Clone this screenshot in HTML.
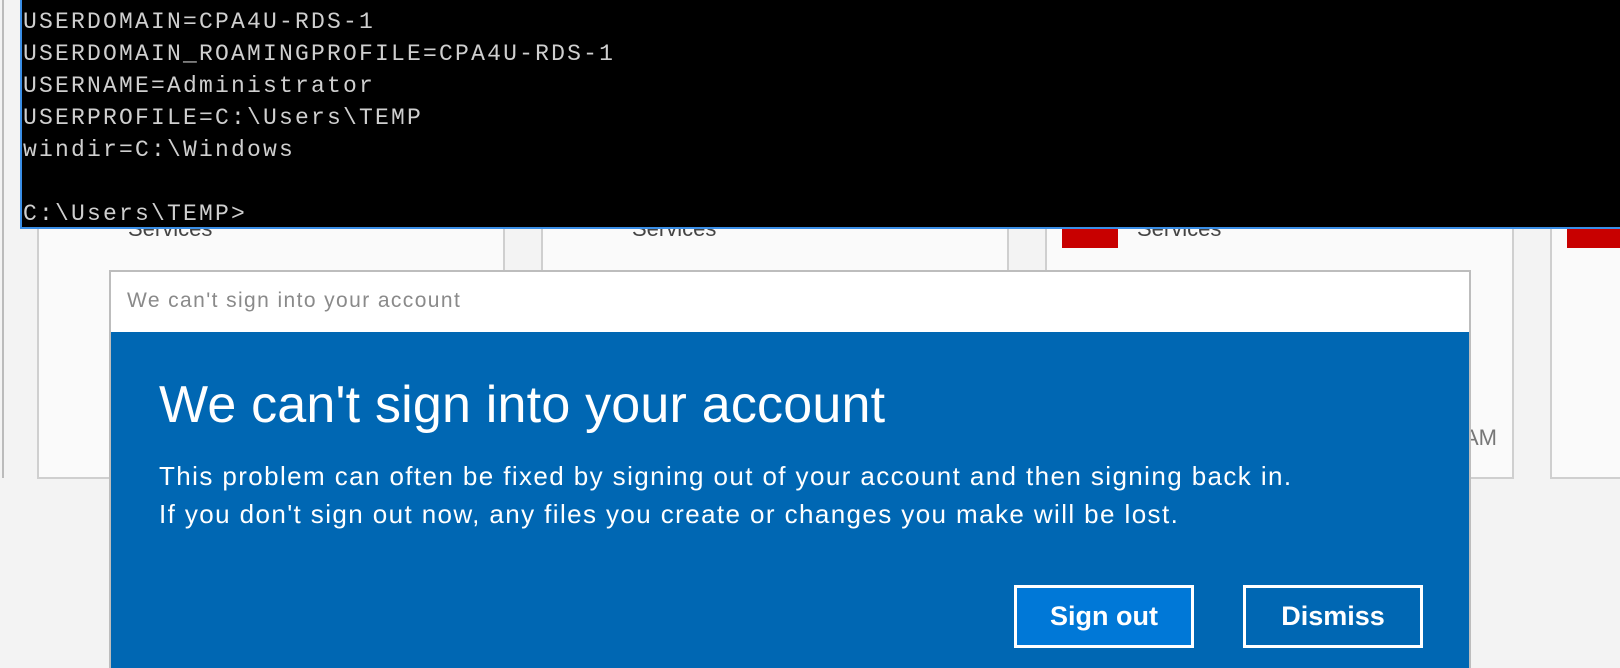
<!DOCTYPE html>
<html><head><style>
*{margin:0;padding:0;box-sizing:border-box}
html,body{width:1620px;height:668px;overflow:hidden}
body{background:#f3f3f3;position:relative;font-family:"Liberation Sans",sans-serif}
.card{position:absolute;top:150px;height:329px;background:#fafafa;border:2px solid #cfcfcf}
.red{position:absolute;background:#c80000;top:229px;height:19px}
.svc{position:absolute;top:216px;font-size:22px;color:#444}
#term{position:absolute;left:20px;top:-2px;width:1600px;height:231px;background:#000;border:2px solid #3a8ee6;border-top:none;border-right:none;overflow:hidden}
#term pre{font-family:"Liberation Mono",monospace;font-size:23px;letter-spacing:2.2px;line-height:32px;color:#cfcfcf;position:absolute;left:1px;top:-24px}
#dlg{position:absolute;left:109px;top:270px;width:1362px;height:398px;border:2px solid #bdbdbd;border-bottom:none;background:#fff;overflow:hidden}
#dlg .tb{height:60px;color:#8a8a8a;font-size:21px;letter-spacing:1.4px;padding:17px 0 0 16px}
#dlg .blue{position:absolute;left:0;right:0;top:60px;bottom:0;background:#0067b3}
h1{position:absolute;left:48px;top:43px;font-weight:normal;color:#fff;font-size:52px;letter-spacing:0.2px}
.p{position:absolute;left:48px;top:125px;color:#fff;font-size:26px;letter-spacing:1.4px;line-height:38px}
.btn{position:absolute;top:253px;height:63px;border:3px solid #fff;color:#fff;font-weight:bold;font-size:27px;text-align:center;line-height:56px}
</style></head><body>
<div style="position:absolute;left:2px;top:0;width:2px;height:478px;background:#bbb"></div>
<div class="card" style="left:37px;width:468px"></div>
<div class="card" style="left:541px;width:468px"></div>
<div class="card" style="left:1045px;width:469px"></div>
<div class="card" style="left:1550px;width:90px"></div>
<div class="red" style="left:1062px;width:56px"></div>
<div class="red" style="left:1567px;width:60px"></div>
<div class="svc" style="left:128px">Services</div>
<div class="svc" style="left:632px">Services</div>
<div class="svc" style="left:1137px">Services</div>
<div style="position:absolute;left:1464px;top:425px;font-size:22px;color:#777">AM</div>
<div id="term"><pre>USERDNSDOMAIN=CPA4U.local
USERDOMAIN=CPA4U-RDS-1
USERDOMAIN_ROAMINGPROFILE=CPA4U-RDS-1
USERNAME=Administrator
USERPROFILE=C:\Users\TEMP
windir=C:\Windows

C:\Users\TEMP&gt;</pre></div>
<div id="dlg">
<div class="tb">We can't sign into your account</div>
<div class="blue">
<h1>We can't sign into your account</h1>
<div class="p">This problem can often be fixed by signing out of your account and then signing back in.<br>If you don't sign out now, any files you create or changes you make will be lost.</div>
<div class="btn" style="left:903px;width:180px;background:#0078d7">Sign out</div>
<div class="btn" style="left:1132px;width:180px">Dismiss</div>
</div></div>
</body></html>
